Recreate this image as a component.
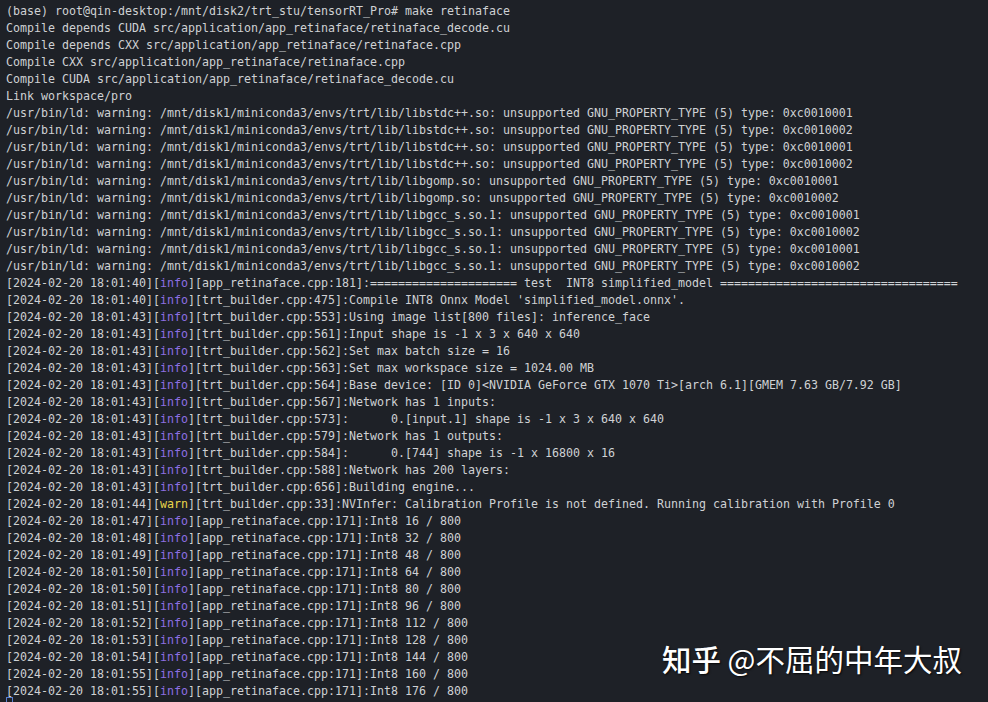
import React from 'react';

// log lines of the terminal, plain ones first
const header = [
  '(base) root@qin-desktop:/mnt/disk2/trt_stu/tensorRT_Pro# make retinaface',
  'Compile depends CUDA src/application/app_retinaface/retinaface_decode.cu',
  'Compile depends CXX src/application/app_retinaface/retinaface.cpp',
  'Compile CXX src/application/app_retinaface/retinaface.cpp',
  'Compile CUDA src/application/app_retinaface/retinaface_decode.cu',
  'Link workspace/pro',
];

const ldLibs = [
  ['libstdc++.so', '1'],
  ['libstdc++.so', '2'],
  ['libstdc++.so', '1'],
  ['libstdc++.so', '2'],
  ['libgomp.so', '1'],
  ['libgomp.so', '2'],
  ['libgcc_s.so.1', '1'],
  ['libgcc_s.so.1', '2'],
  ['libgcc_s.so.1', '1'],
  ['libgcc_s.so.1', '2'],
];

const eq = (n) => '='.repeat(n);

const logs = [
  ['40', 'info', 'app_retinaface.cpp:181', ':' + eq(21) + ' test  INT8 simplified_model ' + eq(34)],
  ['40', 'info', 'trt_builder.cpp:475', ":Compile INT8 Onnx Model 'simplified_model.onnx'."],
  ['43', 'info', 'trt_builder.cpp:553', ':Using image list[800 files]: inference_face'],
  ['43', 'info', 'trt_builder.cpp:561', ':Input shape is -1 x 3 x 640 x 640'],
  ['43', 'info', 'trt_builder.cpp:562', ':Set max batch size = 16'],
  ['43', 'info', 'trt_builder.cpp:563', ':Set max workspace size = 1024.00 MB'],
  ['43', 'info', 'trt_builder.cpp:564', ':Base device: [ID 0]<NVIDIA GeForce GTX 1070 Ti>[arch 6.1][GMEM 7.63 GB/7.92 GB]'],
  ['43', 'info', 'trt_builder.cpp:567', ':Network has 1 inputs:'],
  ['43', 'info', 'trt_builder.cpp:573', ':      0.[input.1] shape is -1 x 3 x 640 x 640'],
  ['43', 'info', 'trt_builder.cpp:579', ':Network has 1 outputs:'],
  ['43', 'info', 'trt_builder.cpp:584', ':      0.[744] shape is -1 x 16800 x 16'],
  ['43', 'info', 'trt_builder.cpp:588', ':Network has 200 layers:'],
  ['43', 'info', 'trt_builder.cpp:656', ':Building engine...'],
  ['44', 'warn', 'trt_builder.cpp:33', ':NVInfer: Calibration Profile is not defined. Running calibration with Profile 0'],
  ['47', 'info', 'app_retinaface.cpp:171', ':Int8 16 / 800'],
  ['48', 'info', 'app_retinaface.cpp:171', ':Int8 32 / 800'],
  ['49', 'info', 'app_retinaface.cpp:171', ':Int8 48 / 800'],
  ['50', 'info', 'app_retinaface.cpp:171', ':Int8 64 / 800'],
  ['50', 'info', 'app_retinaface.cpp:171', ':Int8 80 / 800'],
  ['51', 'info', 'app_retinaface.cpp:171', ':Int8 96 / 800'],
  ['52', 'info', 'app_retinaface.cpp:171', ':Int8 112 / 800'],
  ['53', 'info', 'app_retinaface.cpp:171', ':Int8 128 / 800'],
  ['54', 'info', 'app_retinaface.cpp:171', ':Int8 144 / 800'],
  ['55', 'info', 'app_retinaface.cpp:171', ':Int8 160 / 800'],
  ['55', 'info', 'app_retinaface.cpp:171', ':Int8 176 / 800'],
];

export default function App() {
  return (
    <div className="relative w-[988px] h-[702px] overflow-hidden bg-[#1e2127] text-[#cfd1d4]">
      <div
        className="pl-[6px] pt-[3px] text-[11.63px] leading-[17px] whitespace-pre"
        style={{ fontFamily: '"DejaVu Sans Mono", "Liberation Mono", monospace' }}
      >
        {header.map((l, i) => (
          <div key={'h' + i}>{l}</div>
        ))}
        {ldLibs.map(([lib, n], i) => (
          <div key={'l' + i}>
            {`/usr/bin/ld: warning: /mnt/disk1/miniconda3/envs/trt/lib/${lib}: unsupported GNU_PROPERTY_TYPE (5) type: 0xc001000${n}`}
          </div>
        ))}
        {logs.map(([sec, lvl, src, msg], i) => (
          <div key={'g' + i}>
            {`[2024-02-20 18:01:${sec}][`}
            <span className={lvl === 'warn' ? 'text-[#e9d54a]' : 'text-[#8d6fe3]'}>{lvl}</span>
            {`][${src}]${msg}`}
          </div>
        ))}
      </div>

      {/* cursor */}
      <div className="absolute left-[6px] top-[697px] w-[7px] h-[8px] border border-[#5a7fd0]" />

      {/* watermark */}
      <div
        className="absolute right-[26px] top-[639px] text-[29.5px] leading-[38px] text-white whitespace-pre [text-shadow:1px_1px_2px_rgba(0,0,0,0.8)]"
        style={{ fontFamily: '"Noto Sans CJK SC", "Noto Sans", sans-serif' }}
      >
        <span className="font-medium">知乎</span>
        <span> @不屈的中年大叔</span>
      </div>
    </div>
  );
}
